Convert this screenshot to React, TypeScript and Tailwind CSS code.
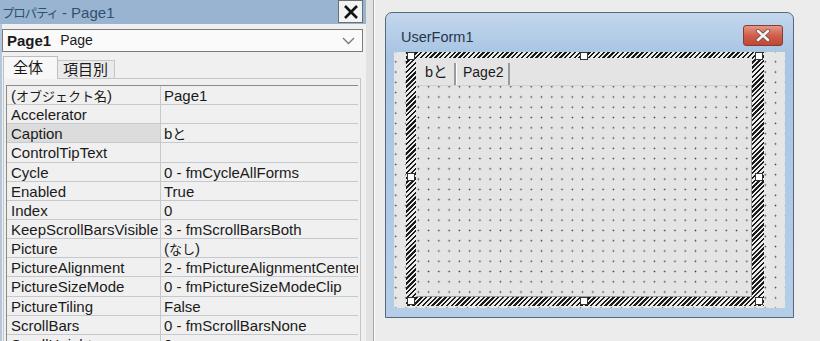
import React from "react";

const rows: { name: React.ReactNode; value: React.ReactNode; hl?: boolean }[] = [
  { name: <>(<span className="text-[13px]">オブジェクト名</span>)</>, value: "Page1" },
  { name: "Accelerator", value: "" },
  { name: "Caption", value: <>b<span className="text-[14px]">と</span></>, hl: true },
  { name: "ControlTipText", value: "" },
  { name: "Cycle", value: "0 - fmCycleAllForms" },
  { name: "Enabled", value: "True" },
  { name: "Index", value: "0" },
  { name: "KeepScrollBarsVisible", value: "3 - fmScrollBarsBoth" },
  { name: "Picture", value: <>(<span className="text-[13px]">なし</span>)</> },
  { name: "PictureAlignment", value: "2 - fmPictureAlignmentCenter" },
  { name: "PictureSizeMode", value: "0 - fmPictureSizeModeClip" },
  { name: "PictureTiling", value: "False" },
  { name: "ScrollBars", value: "0 - fmScrollBarsNone" },
  { name: "ScrollHeight", value: "0" },
];

function Handle({ className }: { className: string }) {
  return <div className={`absolute w-[8px] h-[8px] bg-white border border-[#333] ${className}`} />;
}

export default function App() {
  return (
    <div className="w-[820px] h-[341px] flex overflow-hidden bg-[#ececec] font-['Liberation_Sans','Noto_Sans_CJK_JP',sans-serif] text-[15px] leading-[19px] text-[#1a1a1a]">
      {/* Properties panel */}
      <div className="w-[366px] h-full shrink-0 flex flex-col bg-[#f0f0f0]">
        <div className="h-[24px] shrink-0 flex items-start bg-[#99b4d1]">
          <div className="pl-[2px] pt-[3px] text-[#30506f] whitespace-nowrap">
            <span className="text-[12.5px] tracking-[-1.2px]">プロパティ</span>
            <span> - Page1</span>
          </div>
          <div className="ml-auto mr-[3px] w-[25px] h-[23px] flex items-center justify-center bg-[#f3f3f3] border border-[#6e6e6e]">
            <svg width="16" height="16" viewBox="0 0 16 16">
              <path d="M2 2L14 14M14 2L2 14" stroke="#111" strokeWidth="2.6" />
            </svg>
          </div>
        </div>
        <div className="flex-1 flex flex-col border-l-2 border-[#b3c7dc]">
          <div className="mt-[5px] mr-[3px] h-[23px] shrink-0 flex items-center pl-[4px] border border-[#7c7c7c] bg-[#fafafa]">
            <span className="font-bold">Page1</span>
            <span className="ml-[9px] text-[14px]">Page</span>
            <svg className="ml-auto mr-[7px]" width="13" height="8" viewBox="0 0 13 8">
              <path d="M1 1L6.5 6.5L12 1" stroke="#777" strokeWidth="1.3" fill="none" />
            </svg>
          </div>
          <div className="mt-[4px] h-[23px] shrink-0 flex items-end ml-[1px]">
            <div className="relative z-10 w-[55px] h-[23px] pl-[9px] pt-[1px] border border-b-0 border-[#bdbdbd] bg-[#f7f7f7] text-[15px]">
              全体
            </div>
            <div className="w-[57px] h-[19px] pl-[5px] border border-b-0 border-l-0 border-[#c6c6c6] bg-[#eaeaea] leading-[18px]">
              項目別
            </div>
          </div>
          <div className="flex-1 -mt-px ml-[1px] mr-[5px] border border-[#c6c6c6] pt-[6px] pl-[2px] pr-[2px] overflow-hidden">
            <div className="border-t border-l border-[#8a8a8a] bg-[#f0f0f0]">
              {rows.map((r, i) => (
                <div key={i} className="flex h-[19.15px] border-b border-[#c4c9cf] whitespace-nowrap overflow-hidden">
                  <div className={`w-[154px] shrink-0 pl-[4px] border-r border-[#c4c9cf] ${r.hl ? "bg-[#dcdcdc]" : ""}`}>
                    {r.name}
                  </div>
                  <div className="flex-1 pl-[3px] overflow-hidden">{r.value}</div>
                </div>
              ))}
            </div>
          </div>
        </div>
      </div>

      {/* separator */}
      <div className="w-[8px] h-full shrink-0 bg-[#e2e2e2] border-r border-[#a3a3a3]" />
      <div className="w-[1px] h-full shrink-0 bg-white" />

      {/* Designer area */}
      <div className="flex-1 h-full pl-[10px] pt-[12px] bg-[#ececec]">
        <div className="w-[409px] h-[306px] flex flex-col rounded-t-[7px] border border-[#56687c] bg-[linear-gradient(to_bottom,#c3d7ed,#a9c5e3_40px,#b5cee8)]">
          <div className="h-[39px] shrink-0 flex items-start justify-between pl-[15px] pr-[10px] pt-[12px]">
            <span className="mt-[3px] text-[14.5px] text-[#26364a]">UserForm1</span>
            <div className="w-[40px] h-[21px] flex items-center justify-center rounded-[3px] border border-[#8a3b2f] bg-[linear-gradient(to_bottom,#e39888,#cf5f4c_50%,#bf4833)]">
              <svg width="16" height="13" viewBox="0 0 16 13">
                <path d="M3 2L13 11M13 2L3 11" stroke="#7a4a42" strokeWidth="4.2" strokeLinecap="round" />
                <path d="M3 2L13 11M13 2L3 11" stroke="#f4f4f4" strokeWidth="2.6" strokeLinecap="round" />
              </svg>
            </div>
          </div>
          <div className="mx-[8px] h-[256px] shrink-0 pl-[12px] bg-[#e6e6e6] bg-[radial-gradient(circle,#3a3a3a_0.6px,transparent_1.1px)] bg-size-[10.27px_10.27px] bg-position-[-3.4px_-5.6px]">
            <div className="relative w-[358px] h-[254px] pt-[6px] pl-[10px] pr-[12px] pb-[9px] bg-[repeating-linear-gradient(135deg,#1c1c1c_0px,#1c1c1c_1.7px,#ececec_1.7px,#ececec_3.4px)]">
              <div className="w-full h-full flex flex-col bg-[#e4e4e4]">
                <div className="h-[27px] shrink-0 flex items-end pl-[3px]">
                  <div className="w-[37px] h-[22px] pl-[6px] text-[14.5px] border-r-2 border-[#9a9a9a]">
                    b<span>と</span>
                  </div>
                  <div className="w-[54px] h-[22px] pl-[6px] text-[14px] border-l border-white border-r-2 border-r-[#9a9a9a]">
                    Page2
                  </div>
                </div>
                <div className="flex-1 border-t border-[#d2d2d2] border-r border-r-[#9c9c9c] border-b border-b-[#9c9c9c] bg-[radial-gradient(circle,#3a3a3a_0.6px,transparent_1.1px)] bg-size-[10.27px_10.27px] bg-position-[-2.8px_-4.4px]" />
              </div>
              <Handle className="left-[1px] top-0" />
              <Handle className="left-[174px] top-0" />
              <Handle className="left-[349px] top-0" />
              <Handle className="left-[1px] top-[121px]" />
              <Handle className="left-[349px] top-[121px]" />
              <Handle className="left-[1px] top-[245px]" />
              <Handle className="left-[174px] top-[245px]" />
              <Handle className="left-[349px] top-[245px]" />
            </div>
          </div>
          <div className="flex-1" />
        </div>
      </div>
    </div>
  );
}
